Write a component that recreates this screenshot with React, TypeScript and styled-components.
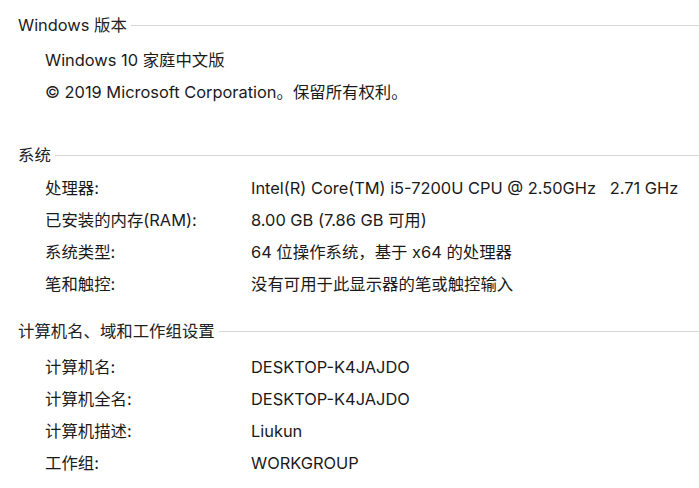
import React from "react";
import styled, { createGlobalStyle } from "styled-components";

type Row = { label: string; value: string };
type Section = { title: string; top: number; gap: number; rows: Array<Row>; plain?: boolean };

const sections: Array<Section> = [
  {
    title: "Windows 版本",
    top: 8,
    gap: 4,
    plain: true,
    rows: [
      { label: "Windows 10 家庭中文版", value: "" },
      { label: "© 2019 Microsoft Corporation。保留所有权利。", value: "" },
    ],
  },
  {
    title: "系统",
    top: 30,
    gap: 2,
    rows: [
      { label: "处理器:", value: "Intel(R) Core(TM) i5-7200U CPU @ 2.50GHz\u00a0\u00a0 2.71 GHz" },
      { label: "已安装的内存(RAM):", value: "8.00 GB (7.86 GB 可用)" },
      { label: "系统类型:", value: "64 位操作系统，基于 x64 的处理器" },
      { label: "笔和触控:", value: "没有可用于此显示器的笔或触控输入" },
    ],
  },
  {
    title: "计算机名、域和工作组设置",
    top: 14,
    gap: 5,
    rows: [
      { label: "计算机名:", value: "DESKTOP-K4JAJDO" },
      { label: "计算机全名:", value: "DESKTOP-K4JAJDO" },
      { label: "计算机描述:", value: "Liukun" },
      { label: "工作组:", value: "WORKGROUP" },
    ],
  },
];

const App: React.FC = () => {
  return (
    <>
      <GlobalStyle />
      <Page>
        {sections.map((s) => (
          <Group key={s.title} $top={s.top}>
            <Legend $gap={s.gap}>
              <LegendText>{s.title}</LegendText>
              <Rule />
            </Legend>
            {s.rows.map((r) =>
              s.plain ? (
                <Line key={r.label}>{r.label}</Line>
              ) : (
                <InfoRow key={r.label}>
                  <Label>{r.label}</Label>
                  <Value>{r.value}</Value>
                </InfoRow>
              )
            )}
          </Group>
        ))}
      </Page>
    </>
  );
};

export default App;

const GlobalStyle = createGlobalStyle`
  html, body {
    margin: 0;
    padding: 0;
    background: #fff;
  }
  body {
    font-family: Inter, "Noto Sans CJK SC", sans-serif;
    font-size: 16.4px;
    color: #1a1a1a;
  }
`;

const Page = styled.div`
  width: 699px;
  height: 488px;
  overflow: hidden;
  padding-left: 18px;
  box-sizing: border-box;
`;

const Group = styled.section<{ $top: number }>`
  margin-top: ${(p) => p.$top}px;
`;

const Legend = styled.div<{ $gap: number }>`
  display: flex;
  align-items: center;
  height: 32px;
  margin-bottom: ${(p) => p.$gap}px;
`;

const LegendText = styled.span`
  white-space: nowrap;
  color: #222;
`;

const Rule = styled.div`
  flex: 1;
  height: 1px;
  margin: 2px 0 0 4px;
  background: #d6d6d6;
`;

const Line = styled.div`
  height: 32px;
  line-height: 32px;
  padding-left: 27px;
  white-space: nowrap;
`;

const InfoRow = styled.div`
  display: grid;
  grid-template-columns: 206px 1fr;
  height: 32px;
  line-height: 32px;
  padding-left: 27px;
  white-space: nowrap;
`;

const Label = styled.span``;

const Value = styled.span``;
